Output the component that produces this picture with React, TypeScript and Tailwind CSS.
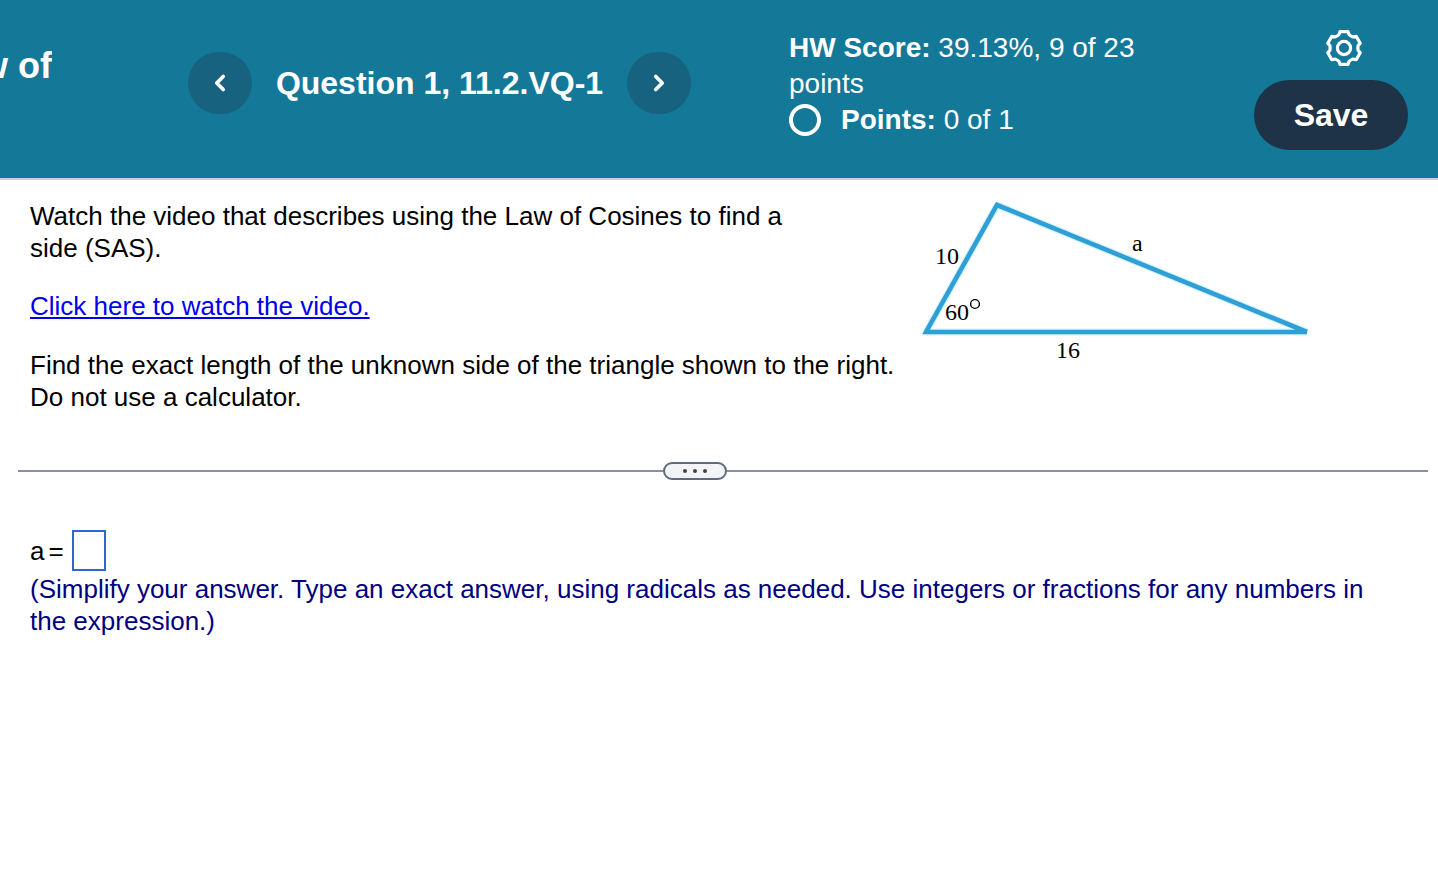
import { ChevronLeft, ChevronRight } from "lucide-react";

interface StepButtonProps {
  label: string;
  direction: "prev" | "next";
}

function StepButton({ label, direction }: StepButtonProps) {
  const Icon = direction === "prev" ? ChevronLeft : ChevronRight;

  return (
    <button
      type="button"
      aria-label={label}
      className="flex h-[62px] w-16 shrink-0 items-center justify-center rounded-full bg-[#17627f] text-white"
    >
      <Icon size={26} strokeWidth={3.4} />
    </button>
  );
}

function GearIcon() {
  return (
    <svg
      width="40"
      height="40"
      viewBox="-20 -20 40 40"
      fill="none"
      stroke="currentColor"
      strokeWidth="3.2"
      strokeLinejoin="round"
      aria-hidden="true"
    >
      <path d="M-4-16.4H4L5-13.4Q6.8-11.8 9.1-11L12.2-11.7 16.2-4.7 14.1-2.4Q13.6 0 14.1 2.4L16.2 4.7 12.2 11.7 9.1 11Q6.8 11.8 5 13.4L4 16.4H-4L-5 13.4Q-6.8 11.8-9.1 11L-12.2 11.7-16.2 4.7-14.1 2.4Q-13.6 0-14.1-2.4L-16.2-4.7-12.2-11.7-9.1-11Q-6.8-11.8-5-13.4Z" />
      <circle r="6.6" />
    </svg>
  );
}

function Header() {
  return (
    <header className="flex h-45 border-b-2 border-[#c9cfdc] bg-[#147899] text-white">
      <div className="flex w-[52px] shrink-0 justify-end overflow-hidden pt-11">
        <span className="text-4xl leading-11 font-bold whitespace-nowrap">w of</span>
      </div>

      <nav
        aria-label="Question"
        className="ml-34 flex w-[503px] shrink-0 items-center justify-between self-start pt-13"
      >
        <StepButton label="Previous question" direction="prev" />
        <h1 className="text-[32px] leading-10 font-bold whitespace-nowrap">Question 1, 11.2.VQ-1</h1>
        <StepButton label="Next question" direction="next" />
      </nav>

      <div className="ml-[98px] w-[360px] shrink-0 pt-[30px] text-[28px] leading-9">
        <p>
          <b>HW Score:</b> 39.13%, 9 of 23 points
        </p>
        <p className="flex items-center gap-5">
          <span className="size-8 rounded-full border-4 border-white" />
          <span>
            <b>Points:</b> 0 of 1
          </span>
        </p>
      </div>

      <div className="mr-[30px] ml-auto flex flex-col items-end pt-7">
        <button type="button" aria-label="Settings" className="mr-11">
          <GearIcon />
        </button>
        <button
          type="button"
          className="mt-3 h-[70px] w-[154px] rounded-full bg-[#1e3347] text-[32px] font-bold"
        >
          Save
        </button>
      </div>
    </header>
  );
}

function Triangle() {
  return (
    <svg
      width="400"
      height="170"
      viewBox="0 0 400 170"
      role="img"
      aria-label="Triangle with sides 10, 16 and a"
      className="shrink-0"
    >
      <path d="M391 136H10L81 9 391 136" fill="none" stroke="#d2f4fc" strokeWidth="7" strokeLinejoin="bevel" />
      <path d="M391 136H10L81 9 391 136" fill="none" stroke="#2f9fd6" strokeWidth="4.6" />
      <g className="font-['Liberation_Serif',serif] text-2xl" fill="#000">
        <text x="19" y="68">10</text>
        <text x="216" y="55">a</text>
        <text x="29" y="124">60</text>
        <text x="140" y="162">16</text>
      </g>
      <circle cx="59" cy="108" r="4.4" fill="none" stroke="#000" strokeWidth="1.4" />
    </svg>
  );
}

function Divider() {
  return (
    <div className="mr-[10px] ml-[18px] flex items-center">
      <div className="h-[2px] w-[645px] bg-[#8690a0]" />
      <button
        type="button"
        aria-label="Resize panels"
        className="flex h-[18px] w-16 items-center justify-center gap-[6px] rounded-full border-2 border-[#5f6b7b] bg-[#f3f4f6]"
      >
        <span className="size-1 rounded-full bg-[#444]" />
        <span className="size-1 rounded-full bg-[#444]" />
        <span className="size-1 rounded-full bg-[#444]" />
      </button>
      <div className="h-[2px] flex-1 bg-[#8690a0]" />
    </div>
  );
}

export default function App() {
  return (
    <div className="min-h-screen bg-white font-['Liberation_Sans',Arial,sans-serif] text-[26px] leading-8 text-black">
      <Header />

      <main>
        <section className="flex px-[30px] pt-4 pb-[49px]">
          <div className="w-[886px] shrink-0 pt-1">
            <p className="w-[780px]">
              Watch the video that describes using the Law of Cosines to find a side (SAS).
            </p>
            <p className="mt-[26px]">
              <a href="#video" className="text-[#0000ee] underline">
                Click here to watch the video.
              </a>
            </p>
            <p className="mt-[27px]">
              Find the exact length of the unknown side of the triangle shown to the right. Do not use a calculator.
            </p>
          </div>
          <Triangle />
        </section>

        <Divider />

        <section className="pt-[50px] pr-14 pl-[30px]">
          <div className="flex items-center gap-2">
            <label htmlFor="answer" className="flex gap-1">
              <span>a</span>
              <span>=</span>
            </label>
            <input id="answer" type="text" className="h-[41px] w-[34px] border-2 border-[#3366cc] bg-white px-1" />
          </div>
          <p className="mt-[2px] text-[#000080]">
            (Simplify your answer. Type an exact answer, using radicals as needed. Use integers or fractions for any
            numbers in the expression.)
          </p>
        </section>
      </main>
    </div>
  );
}
